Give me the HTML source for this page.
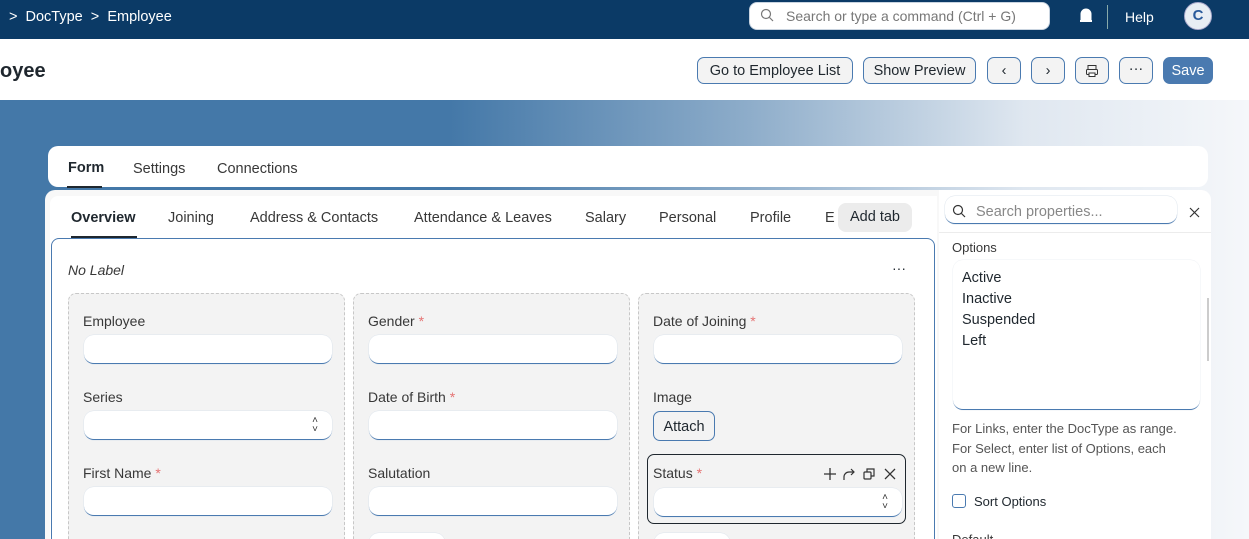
<!DOCTYPE html>
<html><head><meta charset="utf-8"><style>
*{box-sizing:border-box;margin:0;padding:0}
html,body{width:1249px;height:539px;overflow:hidden}
body{font-family:"Liberation Sans",sans-serif;position:relative;background:#f5f7fa;font-size:14px;color:#1f272e}
.nav{position:absolute;left:0;top:0;width:1249px;height:39px;background:#0b3a66;color:#fff}
.hdr{position:absolute;left:0;top:39px;width:1249px;height:61px;background:#fff}
.grad{position:absolute;left:0;top:100px;width:1249px;height:439px;background:linear-gradient(90deg,#4478a8 0%,#4478a8 36%,#8eadca 60%,#dfe7f0 82%,#f5f7fa 100%)}
.abs{position:absolute}
.btn{position:absolute;top:57px;height:27px;border:1px solid #4a7ab0;border-radius:7px;background:#f3f3f3;font-size:14.5px;color:#1f272e;text-align:center;line-height:27px}
.card{background:#fff;position:absolute}
.sec{position:absolute;top:293px;height:260px;background:#f3f3f3;border:1px dashed #c7c7c7;border-radius:8px}
.lbl{position:absolute;font-size:14px;color:#383838}
.req{color:#e57373}
.inp{position:absolute;height:29px;background:#fff;border-radius:10px;border-bottom:1.5px solid #4a7ab0;box-shadow:0 0 0 0.5px #dde4ec}
.tab{position:absolute;top:210px;font-size:14.5px;color:#383838}
.opt{position:absolute;left:962px;font-size:14.5px;color:#1f272e}
</style></head><body>
<div class="nav">
 <div class="abs" style="left:9px;top:9px;font-size:14.5px">&gt;&nbsp;&nbsp;DocType&nbsp;&nbsp;&gt;&nbsp;&nbsp;Employee</div>
 <div class="abs" style="left:749px;top:2px;width:301px;height:28px;background:#fff;border-radius:8px;border:1px solid #c9d4e0"></div>
 <svg class="abs" style="left:760px;top:8px" width="14" height="14" viewBox="0 0 14 14"><circle cx="6" cy="6" r="4.5" fill="none" stroke="#777" stroke-width="1.2"/><path d="M9.5 9.5L13 13" stroke="#777" stroke-width="1.2"/></svg>
 <div class="abs" style="left:786px;top:8px;font-size:14px;color:#777">Search or type a command (Ctrl + G)</div>
 <svg class="abs" style="left:1077px;top:6px" width="18" height="20" viewBox="0 0 18 20"><path d="M4 14V8a5 5 0 0110 0v6z" fill="#fff" stroke="#fff"/><rect x="3" y="14" width="12" height="2" fill="#fff"/></svg>
 <div class="abs" style="left:1107px;top:5px;width:1px;height:24px;background:#8aa"></div>
 <div class="abs" style="left:1125px;top:9px;font-size:14px">Help</div>
 <div class="abs" style="left:1184px;top:2px;width:28px;height:28px;border-radius:50%;background:#e8eef4;border:1px solid #aac;color:#2a5b9c;font-weight:bold;text-align:center;line-height:26px;font-size:15px">C</div>
</div>
<div class="hdr"><div class="abs" style="left:0;top:21px;font-size:20px;font-weight:bold">oyee</div></div>
<div class="btn" style="left:697px;width:156px">Go to Employee List</div>
<div class="btn" style="left:863px;width:113px">Show Preview</div>
<div class="btn" style="left:987px;width:34px">&lsaquo;</div>
<div class="btn" style="left:1031px;width:34px">&rsaquo;</div>
<div class="btn" style="left:1075px;width:34px"><svg width="14" height="14" viewBox="0 0 14 14" style="margin-top:6px"><rect x="3" y="1.5" width="8" height="4" fill="none" stroke="#333"/><rect x="1.5" y="5.5" width="11" height="5" rx="1" fill="none" stroke="#333"/><rect x="4" y="9" width="6" height="3.5" fill="#fff" stroke="#333"/></svg></div>
<div class="btn" style="left:1119px;width:34px;line-height:22px">···</div>
<div class="btn" style="left:1163px;width:50px;background:#4a7ab0;color:#fff;border-color:#4a7ab0">Save</div>
<div class="grad"></div>
<div class="card" style="left:48px;top:146px;width:1160px;height:41px;border-radius:10px"></div>
<div class="abs" style="left:68px;top:160px;font-size:14.5px;font-weight:bold">Form</div>
<div class="abs" style="left:67px;top:186px;width:35px;height:2px;background:#1f272e"></div>
<div class="abs" style="left:133px;top:161px;font-size:14.5px;color:#383838">Settings</div>
<div class="abs" style="left:217px;top:161px;font-size:14.5px;color:#383838">Connections</div>
<div class="card" style="left:45px;top:190px;width:1166px;height:349px;border-radius:10px 10px 0 0;background:#f8f8f8"></div>
<div class="card" style="left:50px;top:196px;width:887px;height:343px;border-radius:8px 0 0 0"></div>
<div class="card" style="left:939px;top:190px;width:272px;height:349px;border-radius:0 10px 0 0"></div>
<div class="tab" style="left:71px;font-weight:bold;color:#1f272e">Overview</div>
<div class="abs" style="left:71px;top:236px;width:66px;height:2px;background:#1f272e"></div>
<div class="tab" style="left:168px">Joining</div>
<div class="tab" style="left:250px">Address &amp; Contacts</div>
<div class="tab" style="left:414px">Attendance &amp; Leaves</div>
<div class="tab" style="left:585px">Salary</div>
<div class="tab" style="left:659px">Personal</div>
<div class="tab" style="left:750px">Profile</div>
<div class="tab" style="left:825px">E</div>
<div class="abs" style="left:838px;top:203px;width:74px;height:29px;background:#ececec;border-radius:8px;font-size:14.5px;line-height:29px;text-align:center">Add tab</div>
<div class="abs" style="left:51px;top:238px;width:884px;height:320px;border:1.5px solid #4a7ab0;border-radius:8px"></div>
<div class="abs" style="left:68px;top:262px;font-style:italic;font-size:14px;color:#383838">No Label</div>
<div class="abs" style="left:892px;top:260px;font-size:14px">···</div>
<div class="sec" style="left:68px;width:277px"></div>
<div class="sec" style="left:353px;width:277px"></div>
<div class="sec" style="left:638px;width:277px"></div>
<div class="lbl" style="left:83px;top:313px">Employee</div>
<div class="inp" style="left:84px;top:335px;width:248px"></div>
<div class="lbl" style="left:83px;top:389px">Series</div>
<div class="inp" style="left:84px;top:411px;width:248px"><span style="position:absolute;right:14px;top:5px;font-size:10px;line-height:9px;color:#333">˄<br>˅</span></div>
<div class="lbl" style="left:83px;top:465px">First Name <span class="req">*</span></div>
<div class="inp" style="left:84px;top:487px;width:248px"></div>
<div class="lbl" style="left:368px;top:313px">Gender <span class="req">*</span></div>
<div class="inp" style="left:369px;top:335px;width:248px"></div>
<div class="lbl" style="left:368px;top:389px">Date of Birth <span class="req">*</span></div>
<div class="inp" style="left:369px;top:411px;width:248px"></div>
<div class="lbl" style="left:368px;top:465px">Salutation</div>
<div class="inp" style="left:369px;top:487px;width:248px"></div>
<div class="inp" style="left:369px;top:533px;width:76px"></div>
<div class="lbl" style="left:653px;top:313px">Date of Joining <span class="req">*</span></div>
<div class="inp" style="left:654px;top:335px;width:248px"></div>
<div class="lbl" style="left:653px;top:389px">Image</div>
<div class="abs" style="left:653px;top:411px;width:62px;height:30px;border:1px solid #4a7ab0;border-radius:7px;background:#f3f3f3;font-size:14.5px;line-height:30px;text-align:center">Attach</div>
<div class="abs" style="left:647px;top:454px;width:259px;height:70px;border:1.5px solid #1f272e;border-radius:7px"></div>
<div class="lbl" style="left:653px;top:465px">Status <span class="req">*</span></div>
<svg class="abs" style="left:822px;top:466px" width="76" height="16" viewBox="0 0 76 16"><path d="M8 2v12M2 8h12" stroke="#333" stroke-width="1.3" fill="none"/><path d="M22 14v-3a5 5 0 015-5h5M29 3l3 3-3 3" stroke="#333" stroke-width="1.2" fill="none"/><rect x="42" y="6" width="7" height="7" rx="1" stroke="#333" stroke-width="1.2" fill="none"/><path d="M45 6V3h7v7h-3" stroke="#333" stroke-width="1.2" fill="none"/><path d="M63 3l10 10M73 3L63 13" stroke="#333" stroke-width="1.3"/></svg>
<div class="inp" style="left:654px;top:488px;width:248px"><span style="position:absolute;right:14px;top:5px;font-size:10px;line-height:9px;color:#333">˄<br>˅</span></div>
<div class="inp" style="left:654px;top:533px;width:76px"></div>
<div class="abs" style="left:945px;top:196px;width:232px;height:28px;border-radius:10px;border-bottom:1.5px solid #4a7ab0;box-shadow:0 0 0 .5px #dde4ec"></div>
<svg class="abs" style="left:952px;top:204px" width="14" height="14" viewBox="0 0 14 14"><circle cx="6" cy="6" r="4.5" fill="none" stroke="#333" stroke-width="1.2"/><path d="M9.5 9.5L13 13" stroke="#333" stroke-width="1.2"/></svg>
<div class="abs" style="left:976px;top:204px;font-size:14.5px;color:#888">Search properties...</div>
<svg class="abs" style="left:1189px;top:207px" width="11" height="11" viewBox="0 0 11 11"><path d="M1 1l9 9M10 1l-9 9" stroke="#333" stroke-width="1.2"/></svg>
<div class="abs" style="left:939px;top:232px;width:272px;height:1px;background:#ececec"></div>
<div class="abs" style="left:952px;top:240px;font-size:13px;color:#383838">Options</div>
<div class="abs" style="left:953px;top:260px;width:247px;height:150px;border-radius:10px;border-bottom:1.5px solid #4a7ab0;box-shadow:0 0 0 .5px #eef1f4"></div>
<div class="opt" style="top:270px">Active</div>
<div class="opt" style="top:291px">Inactive</div>
<div class="opt" style="top:312px">Suspended</div>
<div class="opt" style="top:333px">Left</div>
<div class="abs" style="left:1207px;top:298px;width:2px;height:63px;background:#ccc"></div>
<div class="abs" style="left:952px;top:419px;font-size:13px;line-height:19.5px;color:#555;width:260px;white-space:nowrap">For Links, enter the DocType as range.<br>For Select, enter list of Options, each<br>on a new line.</div>
<div class="abs" style="left:952px;top:494px;width:14px;height:14px;border:1.5px solid #4a7ab0;border-radius:3px"></div>
<div class="abs" style="left:974px;top:494px;font-size:13px;color:#1f272e">Sort Options</div>
<div class="abs" style="left:952px;top:532px;font-size:13px;color:#383838">Default</div>
</body></html>
